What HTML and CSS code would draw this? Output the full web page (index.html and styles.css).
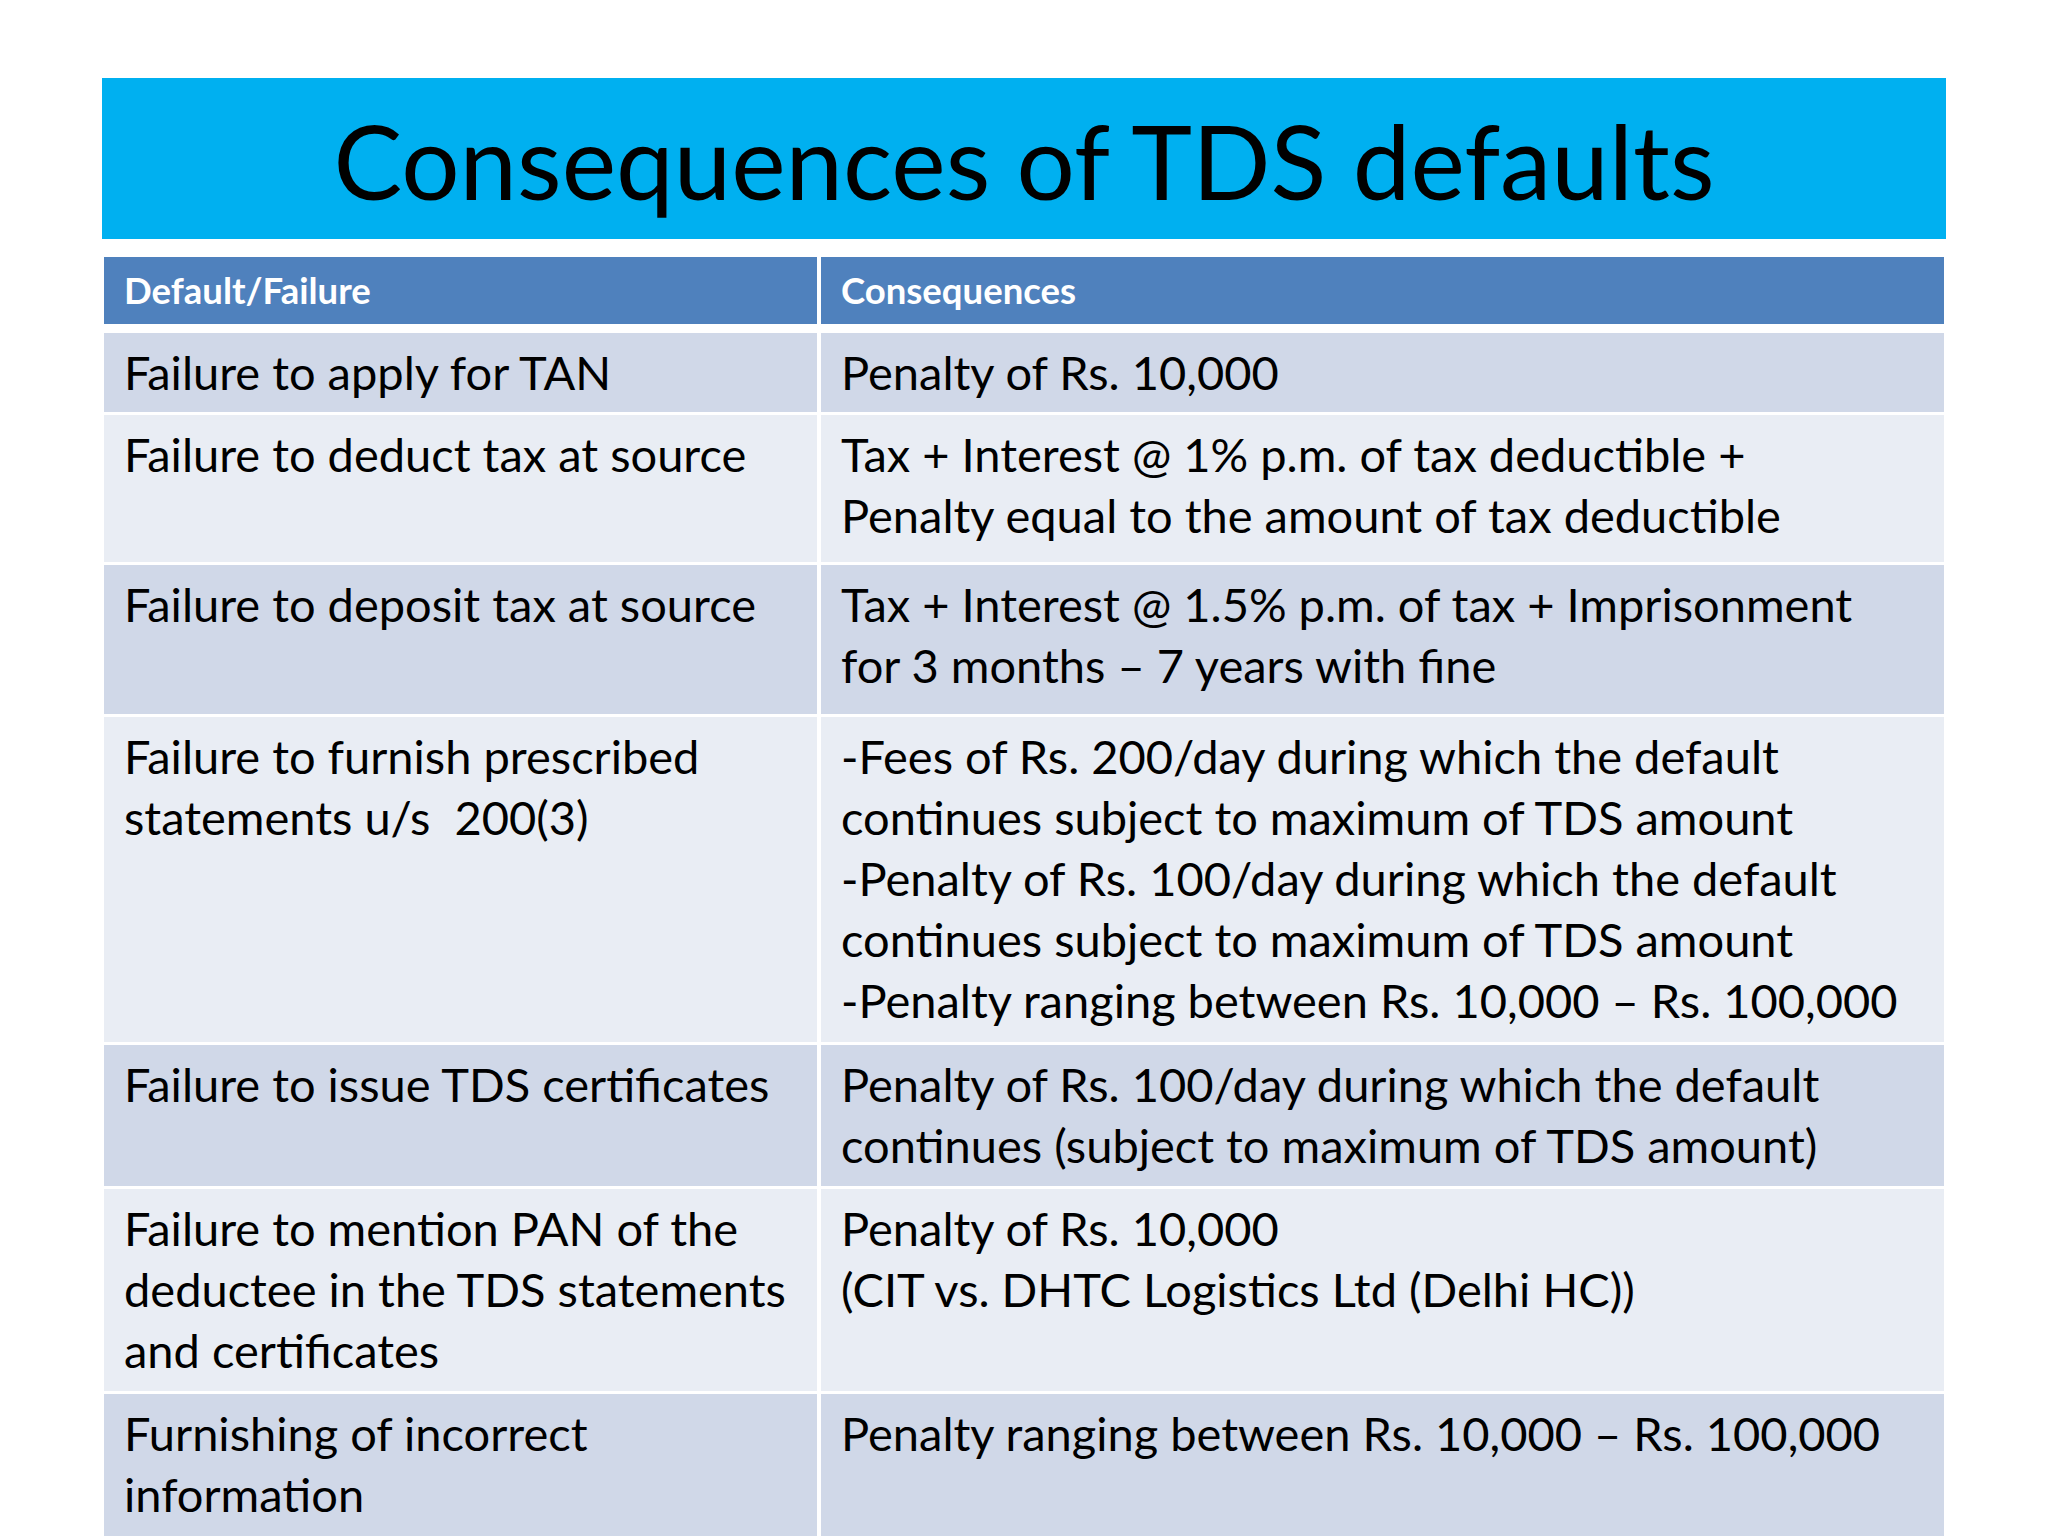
FILE: index.html
```html
<!DOCTYPE html>
<html>
<head>
<meta charset="utf-8">
<link rel="stylesheet" href="styles.css">
</head>
<body>
<div class="slide">
  <div class="title-bar"><h1 class="title">Consequences of TDS defaults</h1></div>
  <div class="table">
    <div class="cell head">Default/Failure</div>
    <div class="cell head">Consequences</div>

    <div class="cell odd">Failure to apply for TAN</div>
    <div class="cell odd">Penalty of Rs. 10,000</div>

    <div class="cell even">Failure to deduct tax at source</div>
    <div class="cell even">Tax + Interest @ 1% p.m. of tax deductible +<br>Penalty equal to the amount of tax deductible</div>

    <div class="cell odd">Failure to deposit tax at source</div>
    <div class="cell odd">Tax + Interest @ 1.5% p.m. of tax + Imprisonment<br>for 3 months – 7 years with fine</div>

    <div class="cell even">Failure to furnish prescribed<br>statements u/s&nbsp; 200(3)</div>
    <div class="cell even">-Fees of Rs. 200/day during which the default<br>continues subject to maximum of TDS amount<br>-Penalty of Rs. 100/day during which the default<br>continues subject to maximum of TDS amount<br>-Penalty ranging between Rs. 10,000 – Rs. 100,000</div>

    <div class="cell odd">Failure to issue TDS certificates</div>
    <div class="cell odd">Penalty of Rs. 100/day during which the default<br>continues (subject to maximum of TDS amount)</div>

    <div class="cell even">Failure to mention PAN of the<br>deductee in the TDS statements<br>and certificates</div>
    <div class="cell even">Penalty of Rs. 10,000<br>(CIT vs. DHTC Logistics Ltd (Delhi HC))</div>

    <div class="cell odd">Furnishing of incorrect<br>information</div>
    <div class="cell odd">Penalty ranging between Rs. 10,000 – Rs. 100,000</div>
  </div>
</div>
</body>
</html>
```

FILE: styles.css
```css
html, body {
  margin: 0;
  padding: 0;
  background: #ffffff;
  overflow: hidden;
}
body {
  width: 2048px;
  height: 1536px;
  font-family: Lato, "Open Sans", sans-serif;
  color: #000000;
}
.slide {
  padding: 78px 0 0 102px;
  width: 1844px;
}
.title-bar {
  background: #00b0f0;
  height: 161px;
  display: flex;
  align-items: center;
  justify-content: center;
}
.title {
  margin: 0;
  font-weight: 400;
  font-size: 103px;
  line-height: 1;
  padding-top: 4px;
  white-space: nowrap;
}
.table {
  margin: 18px 0 0 2px;
  width: 1840px;
  display: grid;
  grid-template-columns: 713px 1123px;
  grid-template-rows: 73px 79px 147px 149px 325px 141px 202px 150px;
  column-gap: 4px;
  row-gap: 3px;
}
.cell {
  font-size: 47px;
  line-height: 61px;
  padding: 9px 16px 9px 20px;
  white-space: nowrap;
  box-sizing: border-box;
}
.cell.head {
  background: #4f81bd;
  color: #ffffff;
  font-weight: 700;
  font-size: 36.5px;
  line-height: 40px;
  height: 67px;
  align-self: start;
  padding-top: 13px;
  padding-bottom: 14px;
}
.cell.odd {
  background: #d0d8e8;
}
.cell.even {
  background: #e9edf4;
}
```
